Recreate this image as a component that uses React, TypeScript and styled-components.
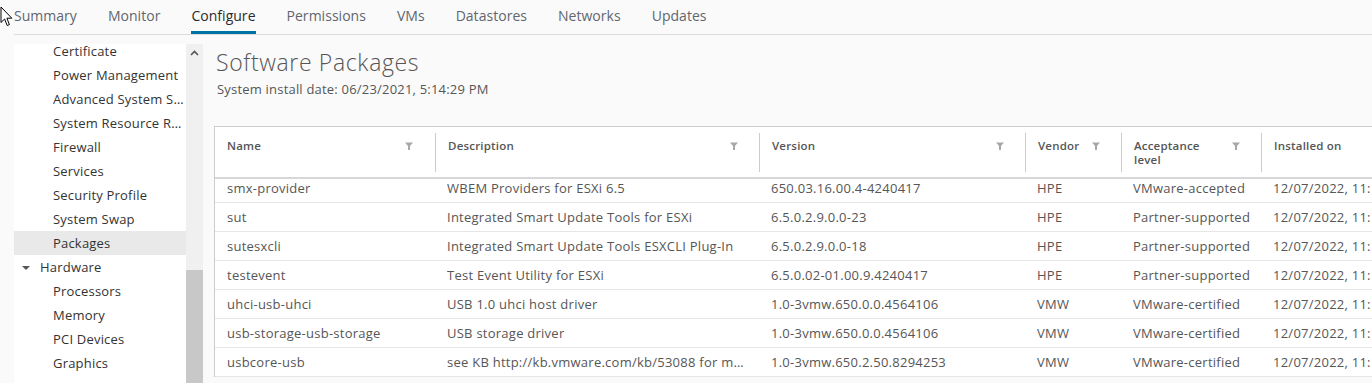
import React from "react";
import styled, { createGlobalStyle } from "styled-components";

const GlobalStyle = createGlobalStyle`
  html, body { margin: 0; padding: 0; }
  body {
    background: #fafafa;
    font-family: "Open Sans", "Noto Sans", "Liberation Sans", sans-serif;
    color: #565656;
  }
  * { box-sizing: border-box; }
`;

const Page = styled.div`
  position: relative;
  width: 1372px;
  height: 383px;
  overflow: hidden;
  display: flex;
  flex-direction: column;
  background: #fafafa;
`;

const TabBar = styled.nav`
  display: flex;
  gap: 31px;
  margin-left: 14px;
  height: 35px;
  border-bottom: 1px solid #dcdcdc;
`;

const Tab = styled.div<{ $active?: boolean }>`
  height: 34px;
  padding-top: 6px;
  font-size: 14px;
  line-height: 20px;
  letter-spacing: 0.03px;
  color: ${(p) => (p.$active ? "#2b2b2b" : "#5f6670")};
  border-bottom: 3px solid ${(p) => (p.$active ? "#0072a3" : "transparent")};
  white-space: nowrap;
`;

const Body = styled.div`
  flex: 1;
  display: flex;
  margin-top: 9px;
  min-height: 0;
`;

const Sidebar = styled.div`
  width: 172px;
  margin-left: 14px;
  background: #fff;
  overflow: hidden;
`;

const SideList = styled.ul`
  list-style: none;
  margin: -5px 0 0 0;
  padding: 0;
`;

const SideItem = styled.li<{ $level: number; $selected?: boolean }>`
  height: 24px;
  display: flex;
  align-items: center;
  padding-left: ${(p) => (p.$level === 0 ? 8 : 39)}px;
  padding-right: 1px;
  font-size: 13px;
  letter-spacing: 0.2px;
  color: #333;
  background: ${(p) => (p.$selected ? "#e9e9e9" : "transparent")};
  white-space: nowrap;
  overflow: hidden;
`;

const SideLabel = styled.span`
  overflow: hidden;
  text-overflow: ellipsis;
  white-space: nowrap;
`;

const Caret = styled.span`
  width: 0;
  height: 0;
  border-left: 4px solid transparent;
  border-right: 4px solid transparent;
  border-top: 4px solid #555;
  margin-right: 10px;
  margin-top: 1px;
`;

const ScrollTrack = styled.div`
  width: 17px;
  background: #f0f0f0;
  display: flex;
  flex-direction: column;
  align-items: stretch;
`;

const ScrollArrow = styled.div`
  height: 18px;
  display: flex;
  align-items: center;
  justify-content: center;
`;

const ScrollSpacer = styled.div`
  height: 208px;
`;

const ScrollThumb = styled.div`
  flex: 1;
  background: #c8c8c8;
`;

const Main = styled.main`
  flex: 1;
  min-width: 0;
  padding-left: 11px;
  overflow: hidden;
`;

const Title = styled.h1`
  margin: 3px 0 0 2px;
  font-size: 23px;
  line-height: 30px;
  font-weight: 300;
  color: #565656;
  letter-spacing: 0.65px;
`;

const Subtitle = styled.div`
  margin: 3px 0 0 3px;
  font-size: 13px;
  line-height: 18px;
  letter-spacing: 0.2px;
  color: #565656;
`;

const Table = styled.div`
  margin-top: 28px;
  width: 1320px;
  background: #fff;
  border-top: 1px solid #cccccc;
  border-left: 1px solid #cccccc;
`;

const cols = "220px 324px 266px 96px 140px 274px";

const HeaderRow = styled.div`
  display: grid;
  grid-template-columns: ${cols};
  height: 52px;
  border-bottom: 2px solid #d7d7d7;
`;

const HeaderCell = styled.div<{ $first?: boolean }>`
  display: flex;
  justify-content: space-between;
  align-items: flex-start;
  margin: ${(p) => (p.$first ? "0" : "6px 0 5px 0")};
  padding: ${(p) => (p.$first ? "12px 22px 0 12px" : "6px 21px 0 12px")};
  border-left: ${(p) => (p.$first ? "none" : "1px solid #cccccc")};
  font-size: 11.5px;
  line-height: 14px;
  letter-spacing: 0.2px;
  font-weight: 600;
  color: #565656;
`;

const HeaderLabel = styled.span`
  max-width: 80px;
`;

const FilterIcon = styled.svg`
  flex: none;
  margin-top: 3px;
`;

const RowsViewport = styled.div`
  overflow: hidden;
`;

const Rows = styled.div`
  margin-top: -5px;
`;

const Row = styled.div`
  display: grid;
  grid-template-columns: ${cols};
  height: 29px;
  border-bottom: 1px solid #e6e6e6;
`;

const Cell = styled.div`
  display: flex;
  align-items: center;
  padding: 0 4px 0 12px;
  font-size: 13px;
  letter-spacing: 0.25px;
  color: #565656;
  white-space: nowrap;
  overflow: hidden;
`;

const CellText = styled.span`
  overflow: hidden;
  text-overflow: ellipsis;
  white-space: nowrap;
`;

const DescText = styled(CellText)`
  max-width: 298px;
`;

const Cursor = styled.svg`
  position: absolute;
  left: 0;
  top: 6px;
  pointer-events: none;
`;

const tabs = ["Summary", "Monitor", "Configure", "Permissions", "VMs", "Datastores", "Networks", "Updates"];

const sideItems: { label: string; level: number; selected?: boolean; caret?: boolean }[] = [
  { label: "Certificate", level: 1 },
  { label: "Power Management", level: 1 },
  { label: "Advanced System Settings", level: 1 },
  { label: "System Resource Reservation", level: 1 },
  { label: "Firewall", level: 1 },
  { label: "Services", level: 1 },
  { label: "Security Profile", level: 1 },
  { label: "System Swap", level: 1 },
  { label: "Packages", level: 1, selected: true },
  { label: "Hardware", level: 0, caret: true },
  { label: "Processors", level: 1 },
  { label: "Memory", level: 1 },
  { label: "PCI Devices", level: 1 },
  { label: "Graphics", level: 1 },
  { label: "Power Management", level: 1 },
];

const headers: { label: string; filter: boolean }[] = [
  { label: "Name", filter: true },
  { label: "Description", filter: true },
  { label: "Version", filter: true },
  { label: "Vendor", filter: true },
  { label: "Acceptance level", filter: true },
  { label: "Installed on", filter: false },
];

const rows: string[][] = [
  ["smx-provider", "WBEM Providers for ESXi 6.5", "650.03.16.00.4-4240417", "HPE", "VMware-accepted", "12/07/2022, 11:10:52 AM"],
  ["sut", "Integrated Smart Update Tools for ESXi", "6.5.0.2.9.0.0-23", "HPE", "Partner-supported", "12/07/2022, 11:10:52 AM"],
  ["sutesxcli", "Integrated Smart Update Tools ESXCLI Plug-In", "6.5.0.2.9.0.0-18", "HPE", "Partner-supported", "12/07/2022, 11:10:52 AM"],
  ["testevent", "Test Event Utility for ESXi", "6.5.0.02-01.00.9.4240417", "HPE", "Partner-supported", "12/07/2022, 11:10:52 AM"],
  ["uhci-usb-uhci", "USB 1.0 uhci host driver", "1.0-3vmw.650.0.0.4564106", "VMW", "VMware-certified", "12/07/2022, 11:10:52 AM"],
  ["usb-storage-usb-storage", "USB storage driver", "1.0-3vmw.650.0.0.4564106", "VMW", "VMware-certified", "12/07/2022, 11:10:52 AM"],
  ["usbcore-usb", "see KB http://kb.vmware.com/kb/53088 for more information", "1.0-3vmw.650.2.50.8294253", "VMW", "VMware-certified", "12/07/2022, 11:10:52 AM"],
];

const Funnel = () => (
  <FilterIcon width="8" height="8" viewBox="0 0 8 8">
    <path d="M0 0.5 H8 L5 4 V8 H3 V4 Z" fill="#a8a8a8" />
  </FilterIcon>
);

export default function App() {
  return (
    <>
      <GlobalStyle />
      <Page>
        <TabBar>
          {tabs.map((t) => (
            <Tab key={t} $active={t === "Configure"}>
              {t}
            </Tab>
          ))}
        </TabBar>
        <Body>
          <Sidebar>
            <SideList>
              {sideItems.map((s, i) => (
                <SideItem key={i} $level={s.level} $selected={s.selected}>
                  {s.caret && <Caret />}
                  <SideLabel>{s.label}</SideLabel>
                </SideItem>
              ))}
            </SideList>
          </Sidebar>
          <ScrollTrack>
            <ScrollArrow>
              <svg width="9" height="6" viewBox="0 0 9 6">
                <path d="M1 5 L4.5 1.5 L8 5" stroke="#555" strokeWidth="1.6" fill="none" />
              </svg>
            </ScrollArrow>
            <ScrollSpacer />
            <ScrollThumb />
          </ScrollTrack>
          <Main>
            <Title>Software Packages</Title>
            <Subtitle>System install date: 06/23/2021, 5:14:29 PM</Subtitle>
            <Table>
              <HeaderRow>
                {headers.map((h, i) => (
                  <HeaderCell key={h.label} $first={i === 0}>
                    <HeaderLabel>{h.label}</HeaderLabel>
                    {h.filter && <Funnel />}
                  </HeaderCell>
                ))}
              </HeaderRow>
              <RowsViewport>
                <Rows>
                  {rows.map((r) => (
                    <Row key={r[0]}>
                      {r.map((c, j) => (
                        <Cell key={j}>
                          {j === 1 ? <DescText>{c}</DescText> : <CellText>{c}</CellText>}
                        </Cell>
                      ))}
                    </Row>
                  ))}
                </Rows>
              </RowsViewport>
            </Table>
          </Main>
        </Body>
        <Cursor width="13" height="21" viewBox="0 0 13 21">
          <path d="M1 1 L1 16.5 L4.6 13 L7.2 19.5 L9.4 18.6 L6.9 12.2 L11.8 12.2 Z" fill="#fff" stroke="#000" strokeWidth="1" strokeLinejoin="round" />
        </Cursor>
      </Page>
    </>
  );
}
